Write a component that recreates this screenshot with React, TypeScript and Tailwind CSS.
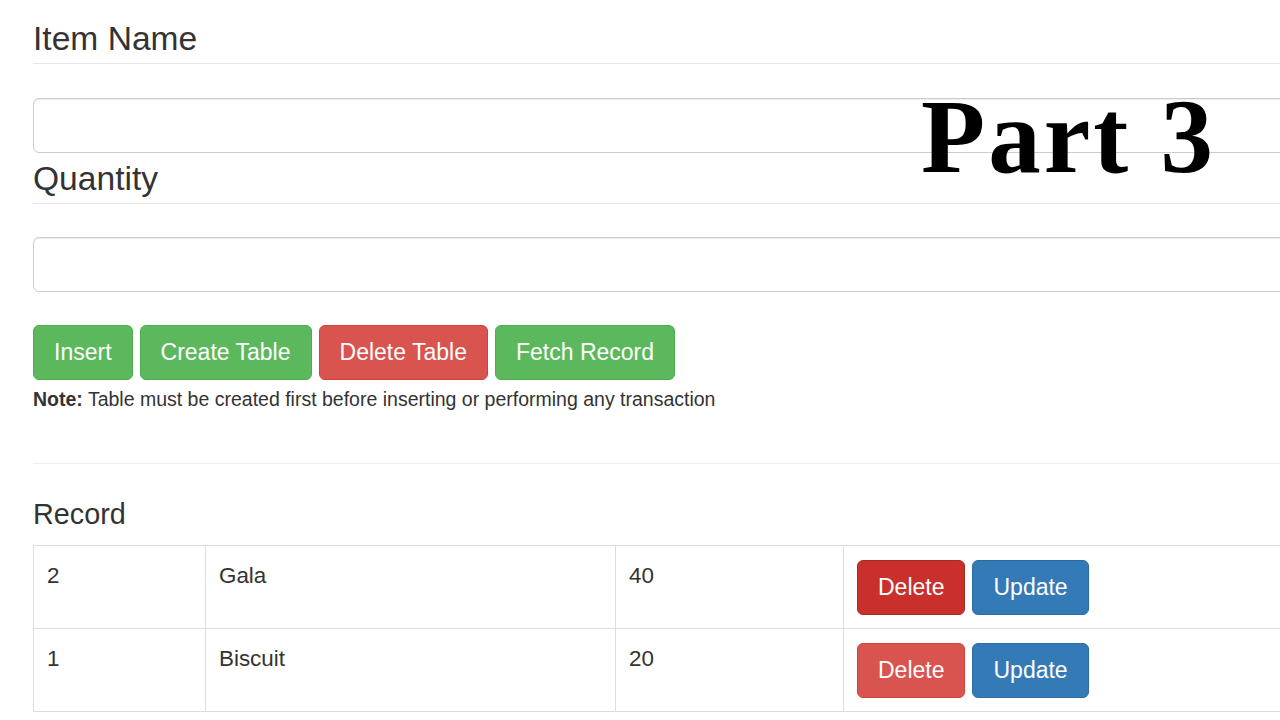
const rows = [
  { id: '2', name: 'Gala', qty: '40', active: true },
  { id: '1', name: 'Biscuit', qty: '20', active: false },
];

const btn = 'h-[55px] rounded-[6px] border px-[20px] text-[23px] leading-none text-white';

function Legend({ children }: { children: string }) {
  return (
    <div className="h-[49px] border-b border-[#e5e5e5] text-[33.6px] leading-[48px] text-[#333]">{children}</div>
  );
}

function Field() {
  return (
    <input
      type="text"
      className="block h-[55px] w-full rounded-[6px] border border-[#ccc] bg-white px-[19px] text-[22.4px] shadow-[inset_0_1px_1px_rgba(0,0,0,0.075)] outline-none"
    />
  );
}

export default function App() {
  return (
    <div className="relative h-[720px] w-[1280px] overflow-hidden bg-white font-['Liberation_Sans',Arial,sans-serif] text-[#333]">
      <div className="ml-[33px] w-[1300px] pt-[15px]">
        <Legend>Item Name</Legend>
        <div className="mt-[34px]">
          <Field />
        </div>
        <div className="mt-[2px]">
          <Legend>Quantity</Legend>
        </div>
        <div className="mt-[33px]">
          <Field />
        </div>

        <div className="mt-[33px] flex gap-[7px]">
          <button className={`${btn} border-[#4cae4c] bg-[#5cb85c]`}>Insert</button>
          <button className={`${btn} border-[#4cae4c] bg-[#5cb85c]`}>Create Table</button>
          <button className={`${btn} border-[#d43f3a] bg-[#d9534f]`}>Delete Table</button>
          <button className={`${btn} border-[#4cae4c] bg-[#5cb85c]`}>Fetch Record</button>
        </div>
        <p className="mt-[6px] text-[19.5px] leading-[27px] text-[#333]">
          <b>Note:</b> Table must be created first before inserting or performing any transaction
        </p>

        <hr className="mt-[50px] border-0 border-t border-[#eee]" />

        <h4 className="mt-[34px] text-[28.8px] leading-[32px]">Record</h4>

        <table className="mt-[15px] w-full table-fixed border-collapse text-[22.4px] leading-[32px]">
          <colgroup>
            <col className="w-[172px]" />
            <col className="w-[410px]" />
            <col className="w-[228px]" />
            <col />
          </colgroup>
          <tbody>
            {rows.map((r) => (
              <tr key={r.id}>
                <td className="border border-[#ddd] px-[13px] pb-[13px] pt-[14px] align-top">{r.id}</td>
                <td className="border border-[#ddd] px-[13px] pb-[13px] pt-[14px] align-top">{r.name}</td>
                <td className="border border-[#ddd] px-[13px] pb-[13px] pt-[14px] align-top">{r.qty}</td>
                <td className="border border-[#ddd] px-[13px] pb-[13px] pt-[14px] align-top">
                  <div className="flex gap-[7px]">
                    <button
                      className={
                        r.active
                          ? `${btn} border-[#ac2925] bg-[#c9302c]`
                          : `${btn} border-[#d43f3a] bg-[#d9534f]`
                      }
                    >
                      Delete
                    </button>
                    <button className={`${btn} border-[#2e6da4] bg-[#337ab7]`}>Update</button>
                  </div>
                </td>
              </tr>
            ))}
          </tbody>
        </table>
      </div>

      <span className="absolute left-[921px] top-[84px] font-['Liberation_Serif','Times_New_Roman',serif] text-[105px] font-bold leading-none tracking-[3px] text-black">
        Part 3
      </span>
    </div>
  );
}
